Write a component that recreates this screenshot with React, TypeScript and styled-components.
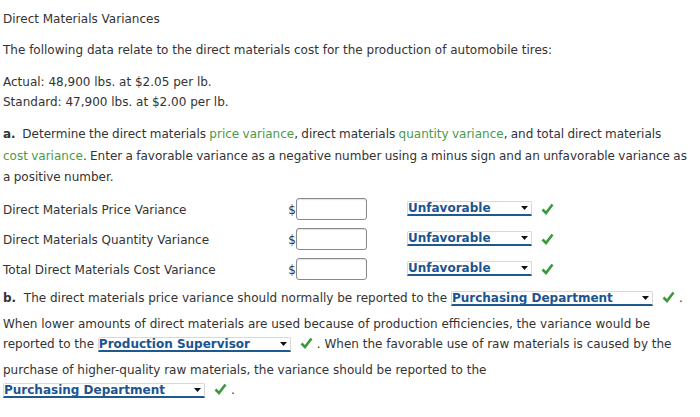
import React from "react";
import styled, { createGlobalStyle } from "styled-components";

const GlobalStyle = createGlobalStyle`
	html, body {
		margin: 0;
		padding: 0;
		background: #ffffff;
		overflow-x: hidden;
	}
	body {
		font-family: "DejaVu Sans", Verdana, sans-serif;
		font-size: 12px;
		color: #333333;
	}
`;

const Page = styled.div`
	width: 690px;
	padding: 9px 0 0 3px;
	line-height: 20px;
`;

const Title = styled.p`
	margin: 0 0 11px 0;
`;

const Para = styled.p<{ $lh?: number; $mb?: number; $ws?: number }>`
	margin: 0 0 ${(p) => (p.$mb !== undefined ? p.$mb : 12)}px 0;
	line-height: ${(p) => (p.$lh ? p.$lh : 20)}px;
	word-spacing: ${(p) => (p.$ws ? p.$ws : 0)}px;
`;

const Term = styled.span`
	color: #4a9a4a;
	white-space: nowrap;
`;

const Bold = styled.b`
	font-weight: bold;
`;

const Table = styled.div`
	display: grid;
	grid-template-columns: 283px 82px 39px auto;
	row-gap: 8px;
	align-items: center;
	margin: 0 0 8px 0;
`;

const Label = styled.div`
	padding-top: 2px;
`;

const Money = styled.div`
	display: flex;
	align-items: center;
`;

const Dollar = styled.span`
	width: 10px;
	text-align: right;
	padding-top: 2px;
`;

const Input = styled.input`
	width: 71px;
	height: 22px;
	box-sizing: border-box;
	margin: 0;
	border: 1px solid #8a8a8a;
	border-radius: 3px;
	box-shadow: inset 0 1px 1px rgba(0, 0, 0, 0.12);
	padding: 0 4px;
	font: inherit;
`;

const Cell = styled.div`
	display: flex;
	align-items: center;
	grid-column: 4;
`;

const Answer = styled.span`
	white-space: nowrap;
`;

const DropBox = styled.span<{ $w: number; $inline?: boolean }>`
	display: inline-flex;
	align-items: center;
	justify-content: space-between;
	box-sizing: border-box;
	width: ${(p) => p.$w}px;
	height: 15px;
	padding: 0 3px 0 0;
	margin-bottom: ${(p) => (p.$inline ? 8 : 0)}px;
	border: 1px solid #d8d8d8;
	border-bottom: 2px solid #1e5a8e;
	border-radius: 2px 2px 0 0;
	color: #1b5490;
	font-weight: bold;
	font-size: 12px;
	line-height: 12px;
	white-space: nowrap;
	overflow: hidden;
`;

const Caret = styled.svg`
	width: 7px;
	height: 4px;
	flex: none;
`;

const Check = styled.svg`
	display: inline-block;
	width: 13px;
	height: 12px;
	margin: 0 4px 0 9px;
	vertical-align: -1px;
	flex: none;
`;

const Dropdown = ({ value, w, inline }: { value: string; w: number; inline?: boolean }) => (
	<DropBox $w={w} $inline={inline}>
		<span>{value}</span>
		<Caret viewBox="0 0 7 4">
			<path d="M0 0 L7 0 L3.5 4 Z" fill="#111" />
		</Caret>
	</DropBox>
);

const Tick = () => (
	<Check viewBox="0 0 13 12">
		<path d="M1.5 6.5 L5 10 L11.5 1.5" fill="none" stroke="#3a9a3a" strokeWidth="2.6" />
	</Check>
);

const InlineAnswer = ({ value, w }: { value: string; w: number }) => (
	<Answer>
		<Dropdown value={value} w={w} inline />
		<Tick />.
	</Answer>
);

const rows = [
	"Direct Materials Price Variance",
	"Direct Materials Quantity Variance",
	"Total Direct Materials Cost Variance",
];

const PartB = styled.p`
	margin: 0;
	line-height: 20px;
`;

const App = () => {
	return (
		<>
			<GlobalStyle />
			<Page>
				<Title>Direct Materials Variances</Title>
				<Para>The following data relate to the direct materials cost for the production of automobile tires:</Para>
				<Para>
					Actual: 48,900 lbs. at $2.05 per lb.
					<br />
					Standard: 47,900 lbs. at $2.00 per lb.
				</Para>
				<Para $lh={21.5} $mb={9} $ws={-0.5}>
					<Bold>a.</Bold>{"\u00a0 "}Determine the direct materials <Term>price variance</Term>, direct materials{" "}
					<Term>quantity variance</Term>, and total direct materials <Term>cost variance</Term>. Enter a favorable
					variance as a negative number using a minus sign and an unfavorable variance as a positive number.
				</Para>
				<Table>
					{rows.map((r) => (
						<React.Fragment key={r}>
							<Label>{r}</Label>
							<Money>
								<Dollar>$</Dollar>
								<Input type="text" />
							</Money>
							<div />
							<Cell>
								<Dropdown value="Unfavorable" w={125} />
								<Tick />
							</Cell>
						</React.Fragment>
					))}
				</Table>
				<PartB>
					<Bold>b.</Bold>{"\u00a0 "}The direct materials price variance should normally be reported to the{" "}
					<InlineAnswer value="Purchasing Department" w={202} /> When lower amounts of direct materials are used
					because of production efficiencies, the variance would be reported to the{" "}
					<InlineAnswer value="Production Supervisor" w={193} /> When the favorable use of raw materials is caused by
					the purchase of higher-quality raw materials, the variance should be reported to the{" "}
					<InlineAnswer value="Purchasing Department" w={202} />
				</PartB>
			</Page>
		</>
	);
};

export default React.memo(App);
